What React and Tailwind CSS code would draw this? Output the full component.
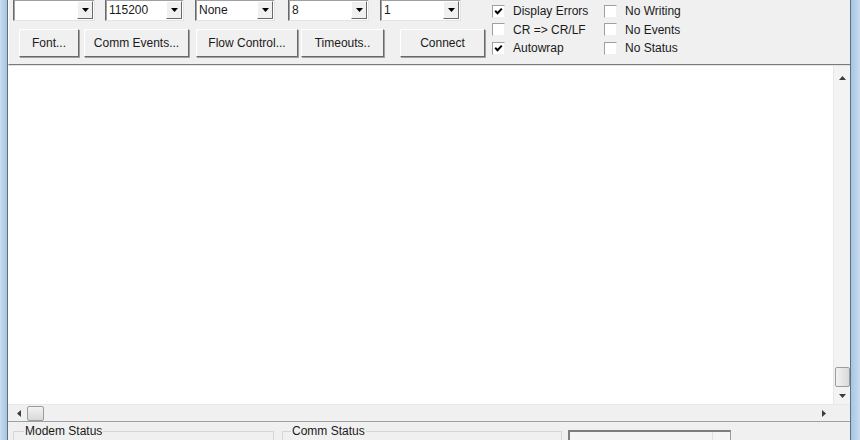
import React from 'react';

const combos = [
    { value: '', left: 'ml-[4px]', width: 'w-[82px]' },
    { value: '115200', left: 'ml-[10px]', width: 'w-[79px]' },
    { value: 'None', left: 'ml-[11px]', width: 'w-[80px]' },
    { value: '8', left: 'ml-[13px]', width: 'w-[81px]' },
    { value: '1', left: 'ml-[11px]', width: 'w-[81px]' },
];

const buttons = [
    { label: 'Font...', left: 'ml-[10px]', width: 'w-[60px]' },
    { label: 'Comm Events...', left: 'ml-[5px]', width: 'w-[105px]' },
    { label: 'Flow Control...', left: 'ml-[7px]', width: 'w-[102px]' },
    { label: 'Timeouts..', left: 'ml-[3px]', width: 'w-[83px]' },
    { label: 'Connect', left: 'ml-[16px]', width: 'w-[85px]' },
];

const checks = [
    ['Display Errors', true, 'No Writing', false],
    ['CR => CR/LF', false, 'No Events', false],
    ['Autowrap', true, 'No Status', false],
];

function Combo({ value, left, width }) {
    return (
        <div className={`${left} ${width} h-[22px] flex bg-white border border-t-[#696969] border-l-[#696969] border-b-[#e3e3e3] border-r-[#e3e3e3] shadow-[inset_1px_1px_0_#a0a0a0]`}>
            <span className="flex-1 pl-[3px] leading-[20px] text-[#1a1a1a]">{value}</span>
            <div className="w-[16px] my-[1px] mr-[1px] bg-[#f0f0f0] border border-t-white border-l-white border-b-[#696969] border-r-[#696969] flex items-center justify-center">
                <svg width="7" height="4" viewBox="0 0 7 4"><path d="M0 0h7L3.5 4z" fill="#000" /></svg>
            </div>
        </div>
    );
}

function Btn({ label, left, width }) {
    return (
        <div className={`${left} ${width} h-[28px] bg-[#f0f0f0] border border-t-white border-l-white border-b-[#696969] border-r-[#696969] shadow-[1px_1px_0_#a0a0a0] flex items-center justify-center text-[#1a1a1a]`}>
            {label}
        </div>
    );
}

function Check({ checked, label }) {
    return (
        <div className="flex items-center h-[18.5px]">
            <div className="w-[13px] h-[13px] bg-white border border-t-[#a0a0a0] border-l-[#a0a0a0] border-b-[#f0f0f0] border-r-[#f0f0f0] flex items-center justify-center">
                {checked && (
                    <svg width="9" height="9" viewBox="0 0 9 9"><path d="M1.2 3.8l2.3 2.4L7.8 1.6" stroke="#000" strokeWidth="2" fill="none" /></svg>
                )}
            </div>
            <span className="ml-[8px] text-[#1a1a1a]">{label}</span>
        </div>
    );
}

function Arrow({ dir }) {
    const d = {
        up: 'M0 4L3.5 0L7 4z',
        down: 'M0 0h7L3.5 4z',
        left: 'M4 0v7L0 3.5z',
        right: 'M0 0v7L4 3.5z',
    }[dir];
    const vert = dir === 'up' || dir === 'down';
    return (
        <svg width={vert ? 7 : 4} height={vert ? 4 : 7} viewBox={vert ? '0 0 7 4' : '0 0 4 7'}>
            <path d={d} fill="#3c3c3c" />
        </svg>
    );
}

export default function App() {
    return (
        <div className="w-[860px] h-[440px] flex overflow-hidden font-['Liberation_Sans',Arial,sans-serif] text-[12px] bg-[#f0f0f0]">
            {/* left window frame */}
            <div className="w-[8px] shrink-0 bg-gradient-to-r from-[#c9dcf1] to-[#a8c4e4] border-r border-r-[#5d6f83]"></div>

            <div className="flex-1 flex flex-col min-w-0">
                {/* top control panel */}
                <div className="h-[65px] shrink-0 flex border-b border-b-[#7a7a7a] border-l border-l-[#ffffff]">
                    <div className="w-[484px] shrink-0">
                        <div className="flex mt-[-1px]">
                            {combos.map((c, i) => <Combo key={i} {...c} />)}
                        </div>
                        <div className="flex mt-[8px]">
                            {buttons.map((b) => <Btn key={b.label} {...b} />)}
                        </div>
                    </div>
                    <div className="ml-[-1px] pt-[2px] flex">
                        <div className="w-[112px]">
                            {checks.map((r) => <Check key={r[0]} label={r[0]} checked={r[1]} />)}
                        </div>
                        <div>
                            {checks.map((r) => <Check key={r[2]} label={r[2]} checked={r[3]} />)}
                        </div>
                    </div>
                </div>

                {/* terminal text area with scrollbars */}
                <div className="flex-1 flex flex-col min-h-0 border-t border-t-[#e3e3e3]">
                    <div className="flex-1 flex min-h-0">
                        <div className="flex-1 bg-white"></div>
                        <div className="w-[17px] bg-[#f3f3f3] border-l border-l-[#e8e8e8] flex flex-col items-center">
                            <div className="h-[17px] flex items-center justify-center mt-[3px]"><Arrow dir="up" /></div>
                            <div className="flex-1"></div>
                            <div className="w-[15px] h-[20px] rounded-[2px] border border-[#9c9c9c] bg-gradient-to-r from-[#f2f2f2] to-[#d9d9d9]"></div>
                            <div className="h-[17px] flex items-center justify-center"><Arrow dir="down" /></div>
                        </div>
                    </div>
                    <div className="h-[17px] shrink-0 flex bg-[#f0f0f0] border-t border-t-[#e8e8e8]">
                        <div className="flex-1 flex items-center">
                            <div className="w-[17px] flex justify-center ml-[2px]"><Arrow dir="left" /></div>
                            <div className="w-[17px] h-[15px] rounded-[2px] border border-[#9c9c9c] bg-gradient-to-b from-[#f2f2f2] to-[#d9d9d9]"></div>
                            <div className="flex-1"></div>
                            <div className="w-[17px] flex justify-center mr-[1px]"><Arrow dir="right" /></div>
                        </div>
                        <div className="w-[17px] bg-[#f0f0f0]"></div>
                    </div>
                </div>

                {/* status area */}
                <div className="h-[19px] shrink-0 border-t border-t-[#a0a0a0] flex">
                    <div className="ml-[5px] mt-[9px] w-[261px] border border-[#d5d5d5] border-b-0 relative">
                        <span className="absolute left-[10px] top-[-8px] px-[1px] bg-[#f0f0f0] leading-[14px] text-[#1a1a1a]">Modem Status</span>
                    </div>
                    <div className="ml-[8px] mt-[9px] w-[280px] border border-[#d5d5d5] border-b-0 relative">
                        <span className="absolute left-[8px] top-[-8px] px-[1px] bg-[#f0f0f0] leading-[14px] text-[#1a1a1a]">Comm Status</span>
                    </div>
                    <div className="ml-[6px] mt-[8px] w-[163px] border-t-2 border-l-2 border-r border-t-[#7e7e7e] border-l-[#7e7e7e] border-r-[#9a9a9a] bg-[#f4f4f4] flex">
                        <div className="flex-1"></div>
                        <div className="w-[18px] border-l border-l-[#e0e0e0]"></div>
                    </div>
                </div>
            </div>

            {/* right window frame */}
            <div className="w-[10px] shrink-0 bg-gradient-to-r from-[#a8c4e4] to-[#c9dcf1] border-l border-l-[#5d6f83]"></div>
        </div>
    );
}
